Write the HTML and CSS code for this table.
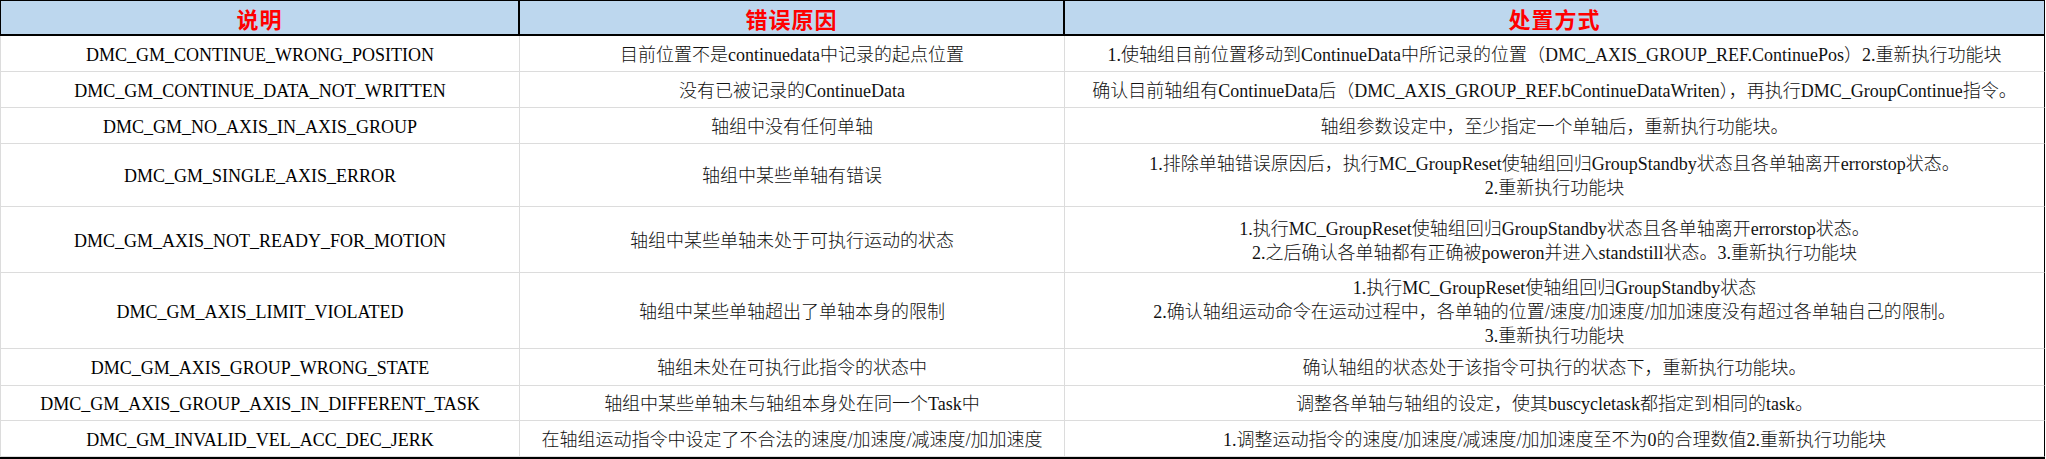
FILE: index.html
```html
<!DOCTYPE html>
<html lang="zh-CN">
<head>
<meta charset="utf-8">
<title>DMC_GM 错误说明</title>
<link rel="stylesheet" href="styles.css">
</head>
<body>
<div class="sheet">
  <div class="cell head first">说明</div>
  <div class="cell head">错误原因</div>
  <div class="cell head last">处置方式</div>

  <div class="cell first">DMC_GM_CONTINUE_WRONG_POSITION</div>
  <div class="cell">目前位置不是continuedata中记录的起点位置</div>
  <div class="cell last">1.使轴组目前位置移动到ContinueData中所记录的位置（DMC_AXIS_GROUP_REF.ContinuePos）2.重新执行功能块</div>

  <div class="cell first">DMC_GM_CONTINUE_DATA_NOT_WRITTEN</div>
  <div class="cell">没有已被记录的ContinueData</div>
  <div class="cell last">确认目前轴组有ContinueData后（DMC_AXIS_GROUP_REF.bContinueDataWriten），再执行DMC_GroupContinue指令。</div>

  <div class="cell first">DMC_GM_NO_AXIS_IN_AXIS_GROUP</div>
  <div class="cell">轴组中没有任何单轴</div>
  <div class="cell last">轴组参数设定中，至少指定一个单轴后，重新执行功能块。</div>

  <div class="cell first">DMC_GM_SINGLE_AXIS_ERROR</div>
  <div class="cell">轴组中某些单轴有错误</div>
  <div class="cell last"><span>1.排除单轴错误原因后，执行MC_GroupReset使轴组回归GroupStandby状态且各单轴离开errorstop状态。</span><span>2.重新执行功能块</span></div>

  <div class="cell first">DMC_GM_AXIS_NOT_READY_FOR_MOTION</div>
  <div class="cell">轴组中某些单轴未处于可执行运动的状态</div>
  <div class="cell last"><span>1.执行MC_GroupReset使轴组回归GroupStandby状态且各单轴离开errorstop状态。</span><span>2.之后确认各单轴都有正确被poweron并进入standstill状态。3.重新执行功能块</span></div>

  <div class="cell first">DMC_GM_AXIS_LIMIT_VIOLATED</div>
  <div class="cell">轴组中某些单轴超出了单轴本身的限制</div>
  <div class="cell last"><span>1.执行MC_GroupReset使轴组回归GroupStandby状态</span><span>2.确认轴组运动命令在运动过程中，各单轴的位置/速度/加速度/加加速度没有超过各单轴自己的限制。</span><span>3.重新执行功能块</span></div>

  <div class="cell first">DMC_GM_AXIS_GROUP_WRONG_STATE</div>
  <div class="cell">轴组未处在可执行此指令的状态中</div>
  <div class="cell last">确认轴组的状态处于该指令可执行的状态下，重新执行功能块。</div>

  <div class="cell first">DMC_GM_AXIS_GROUP_AXIS_IN_DIFFERENT_TASK</div>
  <div class="cell">轴组中某些单轴未与轴组本身处在同一个Task中</div>
  <div class="cell last">调整各单轴与轴组的设定，使其buscycletask都指定到相同的task。</div>

  <div class="cell first">DMC_GM_INVALID_VEL_ACC_DEC_JERK</div>
  <div class="cell">在轴组运动指令中设定了不合法的速度/加速度/减速度/加加速度</div>
  <div class="cell last">1.调整运动指令的速度/加速度/减速度/加加速度至不为0的合理数值2.重新执行功能块</div>
</div>
</body>
</html>
```
FILE: styles.css
```css
html, body {
  margin: 0;
  padding: 0;
  background: #ffffff;
}

.sheet {
  display: grid;
  grid-template-columns: 520px 545px 980px;
  grid-template-rows: 35px 36px 36px 36px 63px 66px 76px 37px 35px 36px;
  width: 2045px;
  border-top: 1px solid #000;
  border-bottom: 2px solid #000;
  font-family: "Liberation Serif", "Noto Sans CJK SC", serif;
  font-size: 18px;
  font-weight: 300;
  color: #111;
}

.cell {
  box-sizing: border-box;
  display: flex;
  flex-direction: column;
  align-items: center;
  justify-content: center;
  text-align: center;
  line-height: 24px;
  white-space: nowrap;
  border-right: 1px solid #dcdcdc;
  border-bottom: 1px solid #dcdcdc;
  padding-top: 2px;
}

.cell.first {
  border-left: 1px solid #dcdcdc;
  font-weight: 400;
  color: #000;
}

.cell.last {
  border-right: 1px solid #000;
}

.head {
  background: #bdd7ee;
  color: #ff0000;
  font-family: "Noto Sans CJK SC", serif;
  font-size: 22px;
  font-weight: 700;
  letter-spacing: 1px;
  border-right: 2px solid #000;
  border-bottom: 2px solid #000;
  padding-top: 0;
}

.head.first {
  border-left: 1px solid #000;
  font-weight: 700;
  color: #ff0000;
}

.head.last {
  border-right: 1px solid #000;
}
```
